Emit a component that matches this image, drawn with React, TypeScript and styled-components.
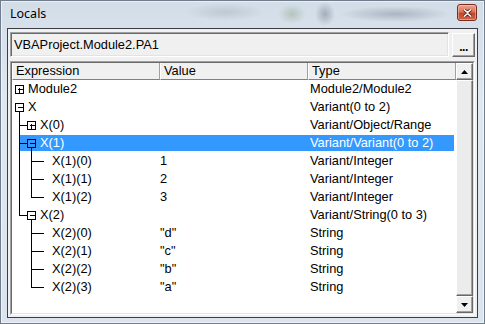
import React from "react";
import styled, { createGlobalStyle } from "styled-components";

const GlobalStyle = createGlobalStyle`
  html, body {
    margin: 0;
    padding: 0;
  }
  body {
    width: 485px;
    height: 324px;
    overflow: hidden;
    font-family: "Liberation Sans", Arial, sans-serif;
  }
`;

type Node = {
  label: string;
  value?: string;
  type: string;
  depth: number;
  box?: "plus" | "minus";
  last?: boolean;
  guides: number[];
  selected?: boolean;
};

const rows: Node[] = [
  { label: "Module2", type: "Module2/Module2", depth: 0, box: "plus", guides: [] },
  { label: "X", type: "Variant(0 to 2)", depth: 0, box: "minus", guides: [] },
  { label: "X(0)", type: "Variant/Object/Range", depth: 1, box: "plus", guides: [] },
  { label: "X(1)", type: "Variant/Variant(0 to 2)", depth: 1, box: "minus", guides: [], selected: true },
  { label: "X(1)(0)", value: "1", type: "Variant/Integer", depth: 2, guides: [0] },
  { label: "X(1)(1)", value: "2", type: "Variant/Integer", depth: 2, guides: [0] },
  { label: "X(1)(2)", value: "3", type: "Variant/Integer", depth: 2, guides: [0], last: true },
  { label: "X(2)", type: "Variant/String(0 to 3)", depth: 1, box: "minus", guides: [], last: true },
  { label: "X(2)(0)", value: '"d"', type: "String", depth: 2, guides: [] },
  { label: "X(2)(1)", value: '"c"', type: "String", depth: 2, guides: [] },
  { label: "X(2)(2)", value: '"b"', type: "String", depth: 2, guides: [] },
  { label: "X(2)(3)", value: '"a"', type: "String", depth: 2, guides: [], last: true },
];

const COL = 148;

// aero glass: soft blurred shapes from the windows behind
const Window = styled.div`
  box-sizing: border-box;
  width: 485px;
  height: 324px;
  display: flex;
  flex-direction: column;
  padding: 0 7px 6px 7px;
  background:
    radial-gradient(ellipse 40px 9px at 225px 12px, rgba(150, 160, 172, 0.35), transparent),
    radial-gradient(ellipse 14px 10px at 292px 14px, rgba(120, 150, 110, 0.35), transparent),
    radial-gradient(ellipse 10px 12px at 325px 14px, rgba(90, 100, 115, 0.4), transparent),
    radial-gradient(ellipse 55px 8px at 395px 14px, rgba(95, 105, 120, 0.35), transparent),
    linear-gradient(180deg, #d3dde8 0%, #dfe7f0 30%, #dbe4ee 100%);
  box-shadow: inset 0 0 0 1px #707d8c, inset 0 0 0 2px rgba(255, 255, 255, 0.55);
`;

const TitleBar = styled.div`
  height: 28px;
  flex: none;
  display: flex;
  align-items: center;
  justify-content: space-between;
  padding-left: 3px;
`;

const Title = styled.span`
  font-family: "Noto Sans", "Open Sans", sans-serif;
  font-size: 12.5px;
  color: #000;
  margin-top: -2px;
`;

const CloseButton = styled.div`
  box-sizing: border-box;
  width: 20px;
  height: 17px;
  margin-right: 1px;
  margin-top: -3px;
  border: 1px solid #7a2b1d;
  border-radius: 3px;
  background: linear-gradient(180deg, #eca58f 0%, #d9735a 45%, #c2462c 55%, #d0644a 100%);
  box-shadow: inset 0 0 0 1px rgba(255, 220, 200, 0.45);
  display: flex;
  align-items: center;
  justify-content: center;
`;

const Client = styled.div`
  flex: 1;
  display: flex;
  flex-direction: column;
  background: #f0f0f0;
  border: 1px solid #3a3f46;
  padding: 3px 2px 2px 2px;
  min-height: 0;
`;

const PathRow = styled.div`
  display: flex;
  gap: 3px;
  height: 25px;
  flex: none;
`;

const PathBox = styled.div`
  flex: 1;
  box-sizing: border-box;
  border-top: 1px solid #a0a0a0;
  border-left: 1px solid #a0a0a0;
  border-right: 1px solid #fff;
  border-bottom: 1px solid #fff;
  box-shadow: inset 1px 1px 0 #696969, inset -1px -1px 0 #e3e3e3;
  font-size: 12.8px;
  line-height: 23px;
  padding-left: 3px;
  color: #000;
`;

const DotsButton = styled.div`
  width: 23px;
  box-sizing: border-box;
  margin-top: 1px;
  border-top: 1px solid #fff;
  border-left: 1px solid #fff;
  border-right: 1px solid #696969;
  border-bottom: 1px solid #696969;
  box-shadow: inset -1px -1px 0 #a0a0a0;
  display: flex;
  align-items: flex-end;
  justify-content: center;
  font-weight: bold;
  font-size: 12px;
  line-height: 14px;
  padding-bottom: 2px;
  letter-spacing: -0.5px;
`;

const ListFrame = styled.div`
  flex: 1;
  margin-top: 4px;
  display: flex;
  box-sizing: border-box;
  border-top: 1px solid #a0a0a0;
  border-left: 1px solid #a0a0a0;
  border-right: 1px solid #fff;
  border-bottom: 1px solid #fff;
  min-height: 0;
`;

const ListInner = styled.div`
  flex: 1;
  display: flex;
  border-top: 1px solid #696969;
  border-left: 1px solid #696969;
  border-right: 1px solid #e3e3e3;
  border-bottom: 1px solid #e3e3e3;
  min-height: 0;
`;

const ListArea = styled.div`
  flex: 1;
  display: flex;
  flex-direction: column;
  background: #fff;
`;

const HeaderRow = styled.div`
  display: grid;
  grid-template-columns: ${COL}px ${COL}px ${COL}px;
  height: 17px;
  background: #f0f0f0;
`;

const HeaderCell = styled.div`
  box-sizing: border-box;
  border-left: 1px solid #fff;
  border-right: 1px solid #a0a0a0;
  border-bottom: 1px solid #808080;
  padding-left: 3px;
  font-size: 12.8px;
  line-height: 16px;
  color: #000;
`;

const Row = styled.div<{ $hl?: number }>`
  display: grid;
  grid-template-columns: ${COL}px ${COL}px ${COL}px;
  height: 18px;
  color: ${(p) => (p.$hl !== undefined ? "#fff" : "#000")};
  background: ${(p) =>
    p.$hl !== undefined
      ? `linear-gradient(#3399ff, #3399ff) no-repeat ${p.$hl}px 1px / ${442 - p.$hl}px 16px`
      : "transparent"};
`;

const NameCell = styled.div`
  display: flex;
  align-items: center;
  font-size: 12.8px;
  line-height: 18px;
  white-space: nowrap;
`;

const TextCell = styled.div<{ $pad: number }>`
  font-size: 12.8px;
  line-height: 18px;
  padding-left: ${(p) => p.$pad}px;
  white-space: nowrap;
`;

const Guides = styled.svg`
  flex: none;
  display: block;
  stroke: #000;
  stroke-width: 1;
  shape-rendering: crispEdges;
`;

const ScrollBar = styled.div`
  width: 17px;
  display: flex;
  flex-direction: column;
  background: #f0f0f0;
`;

const ScrollButton = styled.div`
  box-sizing: border-box;
  height: 17px;
  flex: none;
  border-top: 1px solid #fff;
  border-left: 1px solid #fff;
  border-right: 1px solid #696969;
  border-bottom: 1px solid #696969;
  box-shadow: inset -1px -1px 0 #a0a0a0;
  background: #f0f0f0;
  display: flex;
  align-items: center;
  justify-content: center;
`;

const Thumb = styled.div`
  flex: 1;
  box-sizing: border-box;
  border-top: 1px solid #fff;
  border-left: 1px solid #fff;
  border-right: 1px solid #696969;
  border-bottom: 1px solid #696969;
  box-shadow: inset -1px -1px 0 #a0a0a0;
  background: #ececec;
`;

function Arrow({ down }: { down?: boolean }) {
  return (
    <svg width="7" height="4" viewBox="0 0 7 4" style={{ display: "block" }}>
      <path d={down ? "M0 0 H7 L3.5 4 Z" : "M0 4 H7 L3.5 0 Z"} fill="#000" />
    </svg>
  );
}

function TreeGlyph({ node }: { node: Node }) {
  const cx = 7.5 + 12 * node.depth;
  const cy = 9.5;
  const w = 16 + 12 * node.depth;
  const px = cx - 12;
  return (
    <Guides width={w} height={18} viewBox={`0 0 ${w} 18`}>
      {node.guides.map((g) => (
        <line key={g} x1={7.5 + 12 * g} y1={0} x2={7.5 + 12 * g} y2={18} />
      ))}
      {node.depth > 0 && (
        <>
          <line x1={px} y1={0} x2={px} y2={node.last ? cy + 0.5 : 18} />
          <line x1={px} y1={cy} x2={node.box ? cx - 4 : cx + 0.5} y2={cy} />
        </>
      )}
      {node.box && (
        <>
          <rect x={cx - 4} y={cy - 4} width={8} height={8} fill="none" />
          <line x1={cx - 2} y1={cy} x2={cx + 3} y2={cy} />
          {node.box === "plus" && <line x1={cx} y1={cy - 2} x2={cx} y2={cy + 3} />}
          {node.box === "minus" && <line x1={cx} y1={cy + 4} x2={cx} y2={18} />}
        </>
      )}
    </Guides>
  );
}

export default function App() {
  return (
    <>
      <GlobalStyle />
      <Window>
        <TitleBar>
          <Title>Locals</Title>
          <CloseButton>
            <svg width="9" height="8" viewBox="0 0 9 8">
              <path
                d="M1 0.5 L4.5 3.5 L8 0.5 M1 7.5 L4.5 4.5 L8 7.5"
                stroke="#5a1a10"
                strokeWidth="3"
                fill="none"
              />
              <path
                d="M1 0.5 L4.5 3.5 L8 0.5 M1 7.5 L4.5 4.5 L8 7.5"
                stroke="#fff"
                strokeWidth="1.6"
                fill="none"
              />
            </svg>
          </CloseButton>
        </TitleBar>
        <Client>
          <PathRow>
            <PathBox>VBAProject.Module2.PA1</PathBox>
            <DotsButton>...</DotsButton>
          </PathRow>
          <ListFrame>
            <ListInner>
              <ListArea>
                <HeaderRow>
                  <HeaderCell>Expression</HeaderCell>
                  <HeaderCell>Value</HeaderCell>
                  <HeaderCell>Type</HeaderCell>
                </HeaderRow>
                {rows.map((r) => (
                  <Row key={r.label} $hl={r.selected ? 7 + 12 * (r.depth - 1) : undefined}>
                    <NameCell>
                      <TreeGlyph node={r} />
                      {r.label}
                    </NameCell>
                    <TextCell $pad={0}>{r.value ?? ""}</TextCell>
                    <TextCell $pad={2}>{r.type}</TextCell>
                  </Row>
                ))}
              </ListArea>
              <ScrollBar>
                <ScrollButton>
                  <Arrow />
                </ScrollButton>
                <Thumb />
                <ScrollButton>
                  <Arrow down />
                </ScrollButton>
              </ScrollBar>
            </ListInner>
          </ListFrame>
        </Client>
      </Window>
    </>
  );
}
